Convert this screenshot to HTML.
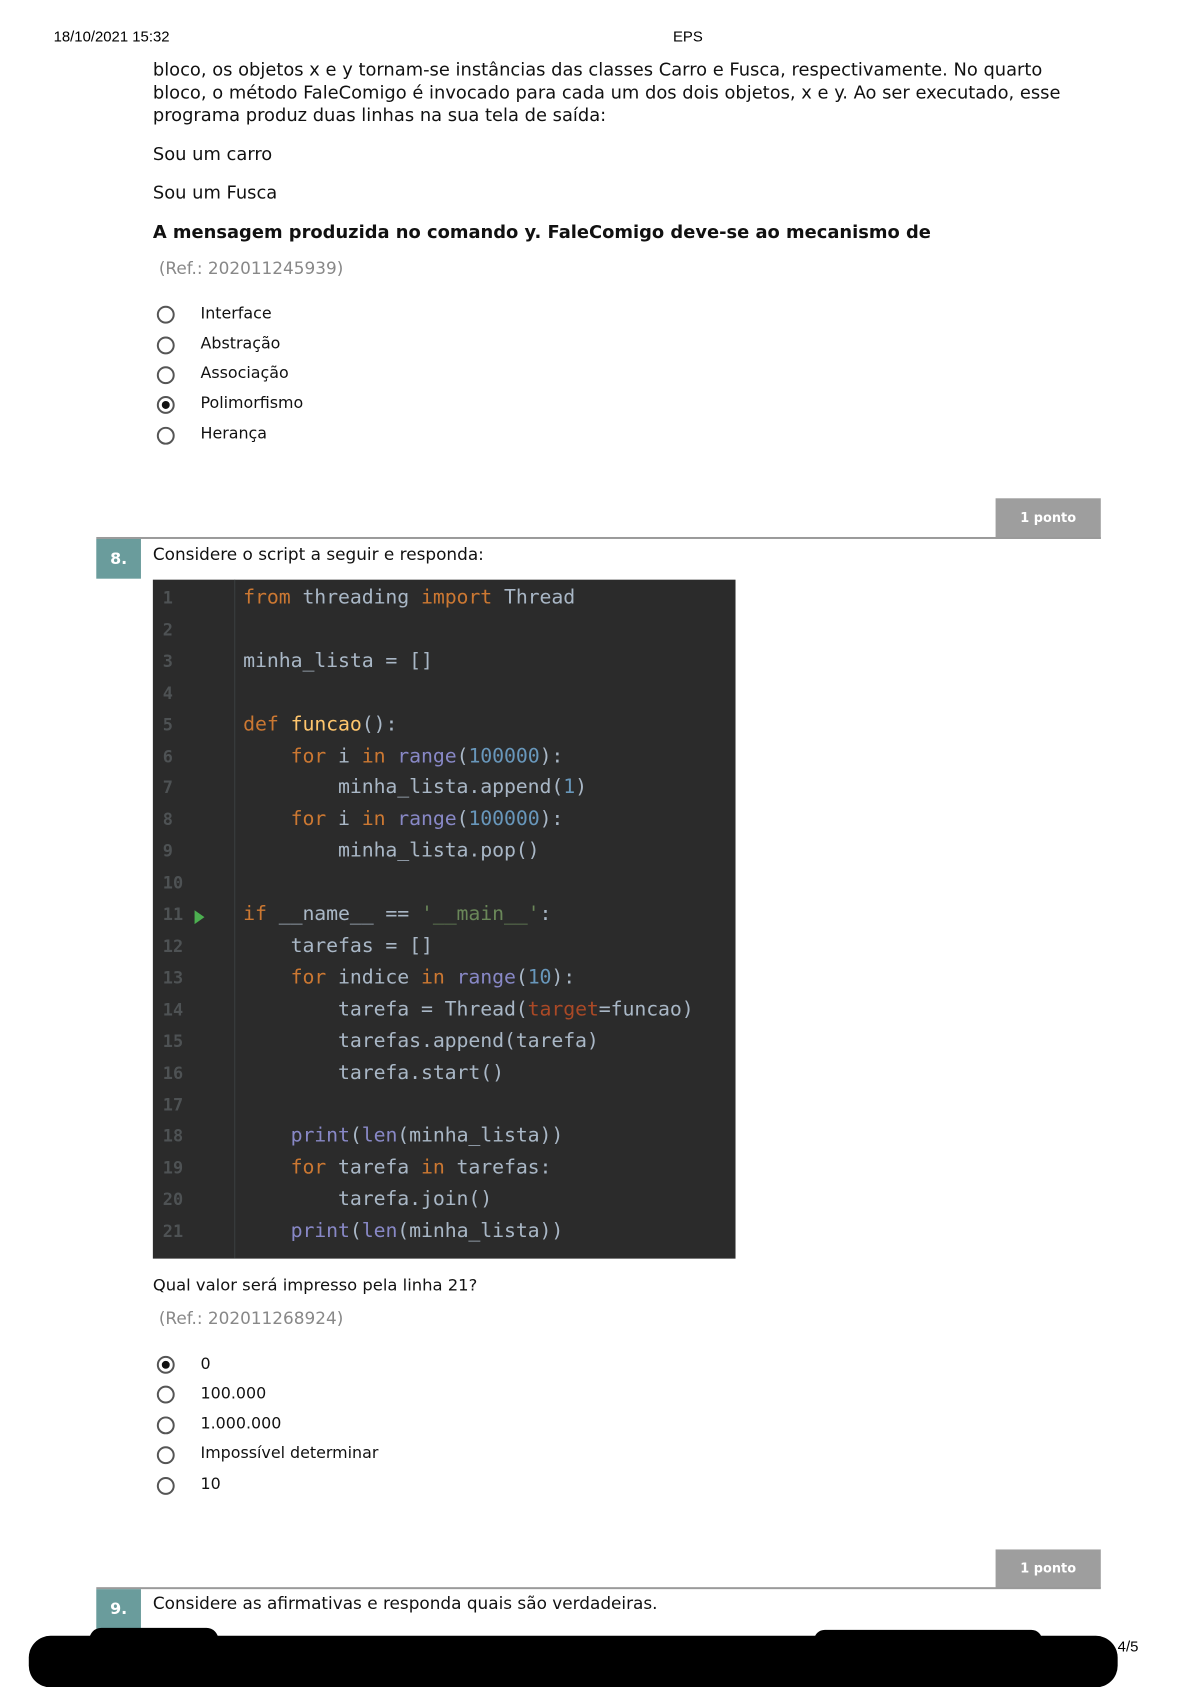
<!DOCTYPE html>
<html><head><meta charset="utf-8"><style>
*{margin:0;padding:0;box-sizing:border-box}
body{width:1191px;height:1684px;background:#fff;position:relative;overflow:hidden;font-family:"DejaVu Sans",Verdana,sans-serif;color:#111}
#w{position:absolute;left:0;top:0;width:1200px;height:1700px;transform:scale(0.9926);transform-origin:0 0}
.a{position:absolute;white-space:nowrap}
.hd{font-family:"Liberation Sans",Arial,sans-serif;font-size:15px;color:#000}
.t{font-size:17px;line-height:23px}
.t18{font-size:18px;line-height:23px}
.ref{font-size:17px;color:#888}
.rad{position:absolute;width:18px;height:18px;border:2px solid #555;border-radius:50%}
.rad.on::after{content:"";position:absolute;left:3px;top:3px;width:8px;height:8px;border-radius:50%;background:#111}
.lbl{font-size:16px}
.pt{position:absolute;background:#9e9e9e;color:#fff;font-weight:bold;font-size:13px;text-align:center}
.num{position:absolute;background:#6a9c9c;color:#fff;font-weight:bold;font-size:16px;text-align:center}
.hr{position:absolute;height:2px;background:#9a9a9a}
.code{position:absolute;left:154px;top:584px;width:587px;height:684px;background:#2b2b2b;overflow:hidden}
.gut{position:absolute;left:82px;top:0;width:1px;height:684px;background:#3c3f41}
.ln{position:absolute;left:10px;font-family:"DejaVu Sans Mono",monospace;font-size:17px;font-weight:bold;color:#4e5254}
.cl{position:absolute;left:91px;font-family:"DejaVu Sans Mono",monospace;font-size:20px;color:#a9b7c6;white-space:pre;letter-spacing:-0.1px}
.k{color:#cc7832}.f{color:#ffc66d}.n{color:#6897bb}.b{color:#8888c6}.s{color:#6a8759}.p{color:#aa4926}
</style></head><body><div id="w">
<div class="a hd" style="left:54px;top:29px">18/10/2021 15:32</div>
<div class="a hd" style="left:678px;top:29px">EPS</div>

<div class="a t18" style="left:154px;top:59px">bloco, os objetos x e y tornam-se instâncias das classes Carro e Fusca, respectivamente. No quarto</div>
<div class="a t18" style="left:154px;top:82px">bloco, o método FaleComigo é invocado para cada um dos dois objetos, x e y. Ao ser executado, esse</div>
<div class="a t18" style="left:154px;top:105px">programa produz duas linhas na sua tela de saída:</div>
<div class="a t18" style="left:154px;top:144px">Sou um carro</div>
<div class="a t18" style="left:154px;top:183px">Sou um Fusca</div>
<div class="a t18" style="left:154px;top:223px;font-weight:bold">A mensagem produzida no comando y. FaleComigo deve-se ao mecanismo de</div>
<div class="a ref" style="left:160px;top:261px">(Ref.: 202011245939)</div>

<div class="rad" style="left:158px;top:308px"></div><div class="a lbl" style="left:202px;top:306px">Interface</div>
<div class="rad" style="left:158px;top:339px"></div><div class="a lbl" style="left:202px;top:336px">Abstração</div>
<div class="rad" style="left:158px;top:369px"></div><div class="a lbl" style="left:202px;top:366px">Associação</div>
<div class="rad on" style="left:158px;top:399px"></div><div class="a lbl" style="left:202px;top:396px">Polimorfismo</div>
<div class="rad" style="left:158px;top:430px"></div><div class="a lbl" style="left:202px;top:427px">Herança</div>

<div class="pt" style="left:1003px;top:502px;width:106px;height:41px;line-height:41px">1 ponto</div>
<div class="hr" style="left:97px;top:541px;width:1012px"></div>
<div class="num" style="left:97px;top:543px;width:45px;height:40px;line-height:40px">8.</div>
<div class="a t" style="left:154px;top:548px">Considere o script a seguir e responda:</div>

<div class="code">
<div class="gut"></div>
<div class="ln" style="top:9px">1</div><div class="ln" style="top:41px">2</div><div class="ln" style="top:73px">3</div><div class="ln" style="top:105px">4</div><div class="ln" style="top:137px">5</div><div class="ln" style="top:169px">6</div><div class="ln" style="top:200px">7</div><div class="ln" style="top:232px">8</div><div class="ln" style="top:264px">9</div><div class="ln" style="top:296px">10</div><div class="ln" style="top:328px">11</div><div class="ln" style="top:360px">12</div><div class="ln" style="top:392px">13</div><div class="ln" style="top:424px">14</div><div class="ln" style="top:456px">15</div><div class="ln" style="top:488px">16</div><div class="ln" style="top:520px">17</div><div class="ln" style="top:551px">18</div><div class="ln" style="top:583px">19</div><div class="ln" style="top:615px">20</div><div class="ln" style="top:647px">21</div>
<div style="position:absolute;left:42px;top:333px;width:0;height:0;border-left:10px solid #4caf50;border-top:7px solid transparent;border-bottom:7px solid transparent"></div>
<div class="cl" style="top:5px"><span class="k">from</span> threading <span class="k">import</span> Thread</div>
<div class="cl" style="top:69px">minha_lista = []</div>
<div class="cl" style="top:133px"><span class="k">def</span> <span class="f">funcao</span>():</div>
<div class="cl" style="top:165px">    <span class="k">for</span> i <span class="k">in</span> <span class="b">range</span>(<span class="n">100000</span>):</div>
<div class="cl" style="top:196px">        minha_lista.append(<span class="n">1</span>)</div>
<div class="cl" style="top:228px">    <span class="k">for</span> i <span class="k">in</span> <span class="b">range</span>(<span class="n">100000</span>):</div>
<div class="cl" style="top:260px">        minha_lista.pop()</div>
<div class="cl" style="top:324px"><span class="k">if</span> __name__ == <span class="s">'__main__'</span>:</div>
<div class="cl" style="top:356px">    tarefas = []</div>
<div class="cl" style="top:388px">    <span class="k">for</span> indice <span class="k">in</span> <span class="b">range</span>(<span class="n">10</span>):</div>
<div class="cl" style="top:420px">        tarefa = Thread(<span class="p">target</span>=funcao)</div>
<div class="cl" style="top:452px">        tarefas.append(tarefa)</div>
<div class="cl" style="top:484px">        tarefa.start()</div>
<div class="cl" style="top:547px">    <span class="b">print</span>(<span class="b">len</span>(minha_lista))</div>
<div class="cl" style="top:579px">    <span class="k">for</span> tarefa <span class="k">in</span> tarefas:</div>
<div class="cl" style="top:611px">        tarefa.join()</div>
<div class="cl" style="top:643px">    <span class="b">print</span>(<span class="b">len</span>(minha_lista))</div>
</div>

<div class="a" style="left:154px;top:1283px;font-size:16.5px;line-height:23px">Qual valor será impresso pela linha 21?</div>
<div class="a ref" style="left:160px;top:1319px">(Ref.: 202011268924)</div>

<div class="rad on" style="left:158px;top:1366px"></div><div class="a lbl" style="left:202px;top:1364px">0</div>
<div class="rad" style="left:158px;top:1396px"></div><div class="a lbl" style="left:202px;top:1394px">100.000</div>
<div class="rad" style="left:158px;top:1427px"></div><div class="a lbl" style="left:202px;top:1424px">1.000.000</div>
<div class="rad" style="left:158px;top:1457px"></div><div class="a lbl" style="left:202px;top:1454px">Impossível determinar</div>
<div class="rad" style="left:158px;top:1488px"></div><div class="a lbl" style="left:202px;top:1485px">10</div>

<div class="pt" style="left:1003px;top:1561px;width:106px;height:39px;line-height:39px">1 ponto</div>
<div class="hr" style="left:97px;top:1599px;width:1012px"></div>
<div class="num" style="left:97px;top:1601px;width:45px;height:40px;line-height:40px">9.</div>
<div class="a t" style="left:154px;top:1605px">Considere as afirmativas e responda quais são verdadeiras.</div>

<div style="position:absolute;left:29px;top:1648px;width:1097px;height:52px;background:#000;border-radius:22px"></div>
<div style="position:absolute;left:90px;top:1640px;width:130px;height:24px;background:#000;border-radius:12px"></div>
<div style="position:absolute;left:820px;top:1642px;width:230px;height:22px;background:#000;border-radius:12px"></div>
<div class="a hd" style="left:1126px;top:1651px">4/5</div>
</div></body></html>
